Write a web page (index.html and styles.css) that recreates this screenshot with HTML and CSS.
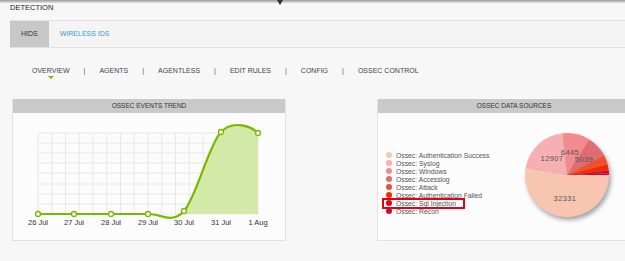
FILE: index.html
```html
<!DOCTYPE html>
<html lang="en">
    <head>
        <meta charset="utf-8">
        <title>Detection</title>
        <link rel="stylesheet" href="styles.css">
    </head>
    <body>

        <div class='topbar'><span class='notch'></span></div>
        <div class='pageTitle'>DETECTION</div>

        <div class='tabs'>
            <div class='tab active'>HIDS</div>
            <div class='tab'>WIRELESS IDS</div>
        </div>

        <div class='subnav'>
            <span class='navItem current'>OVERVIEW</span>
            <span class='sep'>|</span>
            <span class='navItem'>AGENTS</span>
            <span class='sep'>|</span>
            <span class='navItem'>AGENTLESS</span>
            <span class='sep'>|</span>
            <span class='navItem'>EDIT RULES</span>
            <span class='sep'>|</span>
            <span class='navItem'>CONFIG</span>
            <span class='sep'>|</span>
            <span class='navItem'>OSSEC CONTROL</span>
        </div>

        <div class='panels'>

            <div class='panel'>
                <div class='panelHead'>OSSEC EVENTS TREND</div>
                <svg class='trend' width='272' height='127' viewBox='13 113 272 127'>
                    <g class='grid'>
                        <line x1='38' y1='133' x2='258' y2='133'/>
                        <line x1='38' y1='143' x2='258' y2='143'/>
                        <line x1='38' y1='153' x2='258' y2='153'/>
                        <line x1='38' y1='163' x2='258' y2='163'/>
                        <line x1='38' y1='173' x2='258' y2='173'/>
                        <line x1='38' y1='184' x2='258' y2='184'/>
                        <line x1='38' y1='194' x2='258' y2='194'/>
                        <line x1='38' y1='204' x2='258' y2='204'/>
                        <line x1='38' y1='214' x2='258' y2='214'/>
                        <line x1='38' y1='133' x2='38' y2='214'/>
                        <line x1='51.75' y1='133' x2='51.75' y2='214'/>
                        <line x1='65.5' y1='133' x2='65.5' y2='214'/>
                        <line x1='79.25' y1='133' x2='79.25' y2='214'/>
                        <line x1='93' y1='133' x2='93' y2='214'/>
                        <line x1='106.75' y1='133' x2='106.75' y2='214'/>
                        <line x1='120.5' y1='133' x2='120.5' y2='214'/>
                        <line x1='134.25' y1='133' x2='134.25' y2='214'/>
                        <line x1='148' y1='133' x2='148' y2='214'/>
                        <line x1='161.75' y1='133' x2='161.75' y2='214'/>
                        <line x1='175.5' y1='133' x2='175.5' y2='214'/>
                        <line x1='189.25' y1='133' x2='189.25' y2='214'/>
                        <line x1='203' y1='133' x2='203' y2='214'/>
                        <line x1='216.75' y1='133' x2='216.75' y2='214'/>
                        <line x1='230.5' y1='133' x2='230.5' y2='214'/>
                        <line x1='244.25' y1='133' x2='244.25' y2='214'/>
                        <line x1='258' y1='133' x2='258' y2='214'/>
                    </g>

                    <path class='area' d='M184,214 L184,211 C196.2,197.3 208.7,145 221,132 C233.3,119 252,127 258,133 L258,214 Z'/>
                    <path class='line' d='M38,214 L148,214 C160.2,213.5 172,224.7 184,211 C196.2,197.3 208.7,145 221,132 C233.3,119 252,127 258,133'/>

                    <g class='dots'>
                        <circle cx='38' cy='214' r='2.5'/>
                        <circle cx='74' cy='214' r='2.5'/>
                        <circle cx='111' cy='214' r='2.5'/>
                        <circle cx='148' cy='214' r='2.5'/>
                        <circle cx='184' cy='211' r='2.5'/>
                        <circle cx='221' cy='132' r='2.5'/>
                        <circle cx='258' cy='133' r='2.5'/>
                    </g>

                    <g class='axisLabel'>
                        <text x='38' y='225'>26 Jul</text>
                        <text x='74' y='225'>27 Jul</text>
                        <text x='111' y='225'>28 Jul</text>
                        <text x='148' y='225'>29 Jul</text>
                        <text x='184' y='225'>30 Jul</text>
                        <text x='221' y='225'>31 Jul</text>
                        <text x='258' y='225'>1 Aug</text>
                    </g>
                </svg>
            </div>

            <div class='panel'>
                <div class='panelHead'>OSSEC DATA SOURCES</div>
                <div class='sourcesBody'>
                    <div class='legend'>
                        <div class='legendRow'><span class='dot' style='background:#f8c5b0'></span>Ossec: Authentication Success</div>
                        <div class='legendRow'><span class='dot' style='background:#f6b0b3'></span>Ossec: Syslog</div>
                        <div class='legendRow'><span class='dot' style='background:#f28b8e'></span>Ossec: Windows</div>
                        <div class='legendRow'><span class='dot' style='background:#de6c70'></span>Ossec: Accesslog</div>
                        <div class='legendRow'><span class='dot' style='background:#f0502d'></span>Ossec: Attack</div>
                        <div class='legendRow'><span class='dot' style='background:#f02c00'></span>Ossec: Authentication Failed</div>
                        <div class='legendRow'><span class='dot' style='background:#e8001c'></span>Ossec: Sql Injection</div>
                        <div class='legendRow'><span class='dot' style='background:#c40d3d'></span>Ossec: Recon</div>
                        <div class='highlight'></div>
                    </div>

                    <svg class='pie' width='100' height='100' viewBox='517 125 100 100'>
                        <g class='slices'>
                            <path fill='#f8c5b0' d='M567,175 L609,175 A42,42 0 1,1 525.64,167.71 Z'/>
                            <path fill='#f6b0b3' d='M567,175 L525.64,167.71 A42,42 0 0,1 562.61,133.23 Z'/>
                            <path fill='#f28b8e' d='M567,175 L562.61,133.23 A42,42 0 0,1 589.26,139.38 Z'/>
                            <path fill='#de6c70' d='M567,175 L589.26,139.38 A42,42 0 0,1 604.08,155.28 Z'/>
                            <path fill='#f0502d' d='M567,175 L604.08,155.28 A42,42 0 0,1 607.57,164.13 Z'/>
                            <path fill='#f02c00' d='M567,175 L607.57,164.13 A42,42 0 0,1 608.77,170.61 Z'/>
                            <path fill='#e8001c' d='M567,175 L608.77,170.61 A42,42 0 0,1 608.96,173.17 Z'/>
                            <path fill='#c40d3d' d='M567,175 L608.96,173.17 A42,42 0 0,1 609,175 Z'/>
                        </g>
                        <g class='pieLabel'>
                            <text x='552' y='161'>12907</text>
                            <text x='570' y='155'>6445</text>
                            <text x='584' y='162'>5039</text>
                            <text x='565' y='201'>32331</text>
                        </g>
                    </svg>
                </div>
            </div>

        </div>

    </body>
</html>
```

FILE: styles.css
```css
body
{
    margin:           0px;
    background-color: #f7f7f7;
    font-family:      "Liberation Sans", Helvetica, sans-serif;
    color:            #333;
    overflow:         hidden;
}

.topbar
{
    display:          flex;
    height:           3px;
    padding-left:     277px;
    background:       linear-gradient(#9a9a9a, #e4e4e4);
}

.notch
{
    width:            0px;
    height:           0px;
    border-left:      3px solid transparent;
    border-right:     3px solid transparent;
    border-top:       5px solid #333;
}

.pageTitle
{
    padding-left:     10px;
    font-size:        7.5px;
    line-height:      9px;
    color:            #222;
}

.tabs
{
    display:          flex;
    margin-top:       8px;
    margin-left:      10px;
    height:           26px;
    background-color: #f4f4f4;
    border-top:       1px solid #e2e2e2;
    border-bottom:    1px solid #e2e2e2;
}

.tab
{
    padding:          0px 11px;
    font-size:        7px;
    line-height:      26px;
    color:            #3a9ad0;
}

.tab.active
{
    background-color: #c8c8c8;
    color:            #333;
}

.subnav
{
    display:          flex;
    gap:              14px;
    margin-top:       18px;
    padding-left:     32px;
    font-size:        7px;
    line-height:      9px;
    color:            #444;
}

.navItem
{
    position:         relative;
}

.current::after
{
    content:          '';
    position:         absolute;
    left:             16px;
    top:              10px;
    border-left:      3px solid transparent;
    border-right:     3px solid transparent;
    border-top:       3px solid #7ab800;
}

.sep
{
    color:            #555;
}

.panels
{
    display:          flex;
    gap:              91px;
    margin-top:       24px;
    margin-left:      12px;
}

.panel
{
    flex:             none;
    width:            272px;
    height:           141px;
    background-color: #fcfcfc;
    border:           1px solid #e2e2e2;
    border-top:       none;
}

.panelHead
{
    height:           14px;
    background-color: #c9c9c9;
    font-size:        6.5px;
    line-height:      14px;
    text-align:       center;
    color:            #333;
}

.trend
{
    display:          block;
}

.grid line
{
    stroke:           #e8e8e8;
    stroke-width:     1;
}

.area
{
    fill:             #d3e9a8;
}

.line
{
    fill:             none;
    stroke:           #7ab800;
    stroke-width:     2.2;
}

.dots circle
{
    fill:             #fff;
    stroke:           #7ab800;
    stroke-width:     1.3;
}

.axisLabel
{
    font-family:      "Liberation Sans", Helvetica, sans-serif;
    font-size:        7.5px;
    fill:             #333;
    text-anchor:      middle;
}

.sourcesBody
{
    display:          flex;
}

.legend
{
    position:         relative;
    width:            131px;
    padding-top:      38px;
    padding-left:     8px;
}

.legendRow
{
    display:          flex;
    align-items:      center;
    gap:              4px;
    height:           8px;
    font-size:        6.8px;
    color:            #555;
}

.dot
{
    width:            6px;
    height:           6px;
    border-radius:    50%;
}

.highlight
{
    position:         absolute;
    left:             4px;
    top:              85px;
    width:            79px;
    height:           7px;
    border:           2px solid #e8000c;
}

.pie
{
    margin-top:       12px;
    overflow:         visible;
}

.slices
{
    filter:           drop-shadow(2px 3px 2px rgba(0, 0, 0, 0.35));
}

.pieLabel
{
    font-family:      "Liberation Sans", Helvetica, sans-serif;
    font-size:        7.5px;
    letter-spacing:   0.4px;
    fill:             #555;
    text-anchor:      middle;
}
```
